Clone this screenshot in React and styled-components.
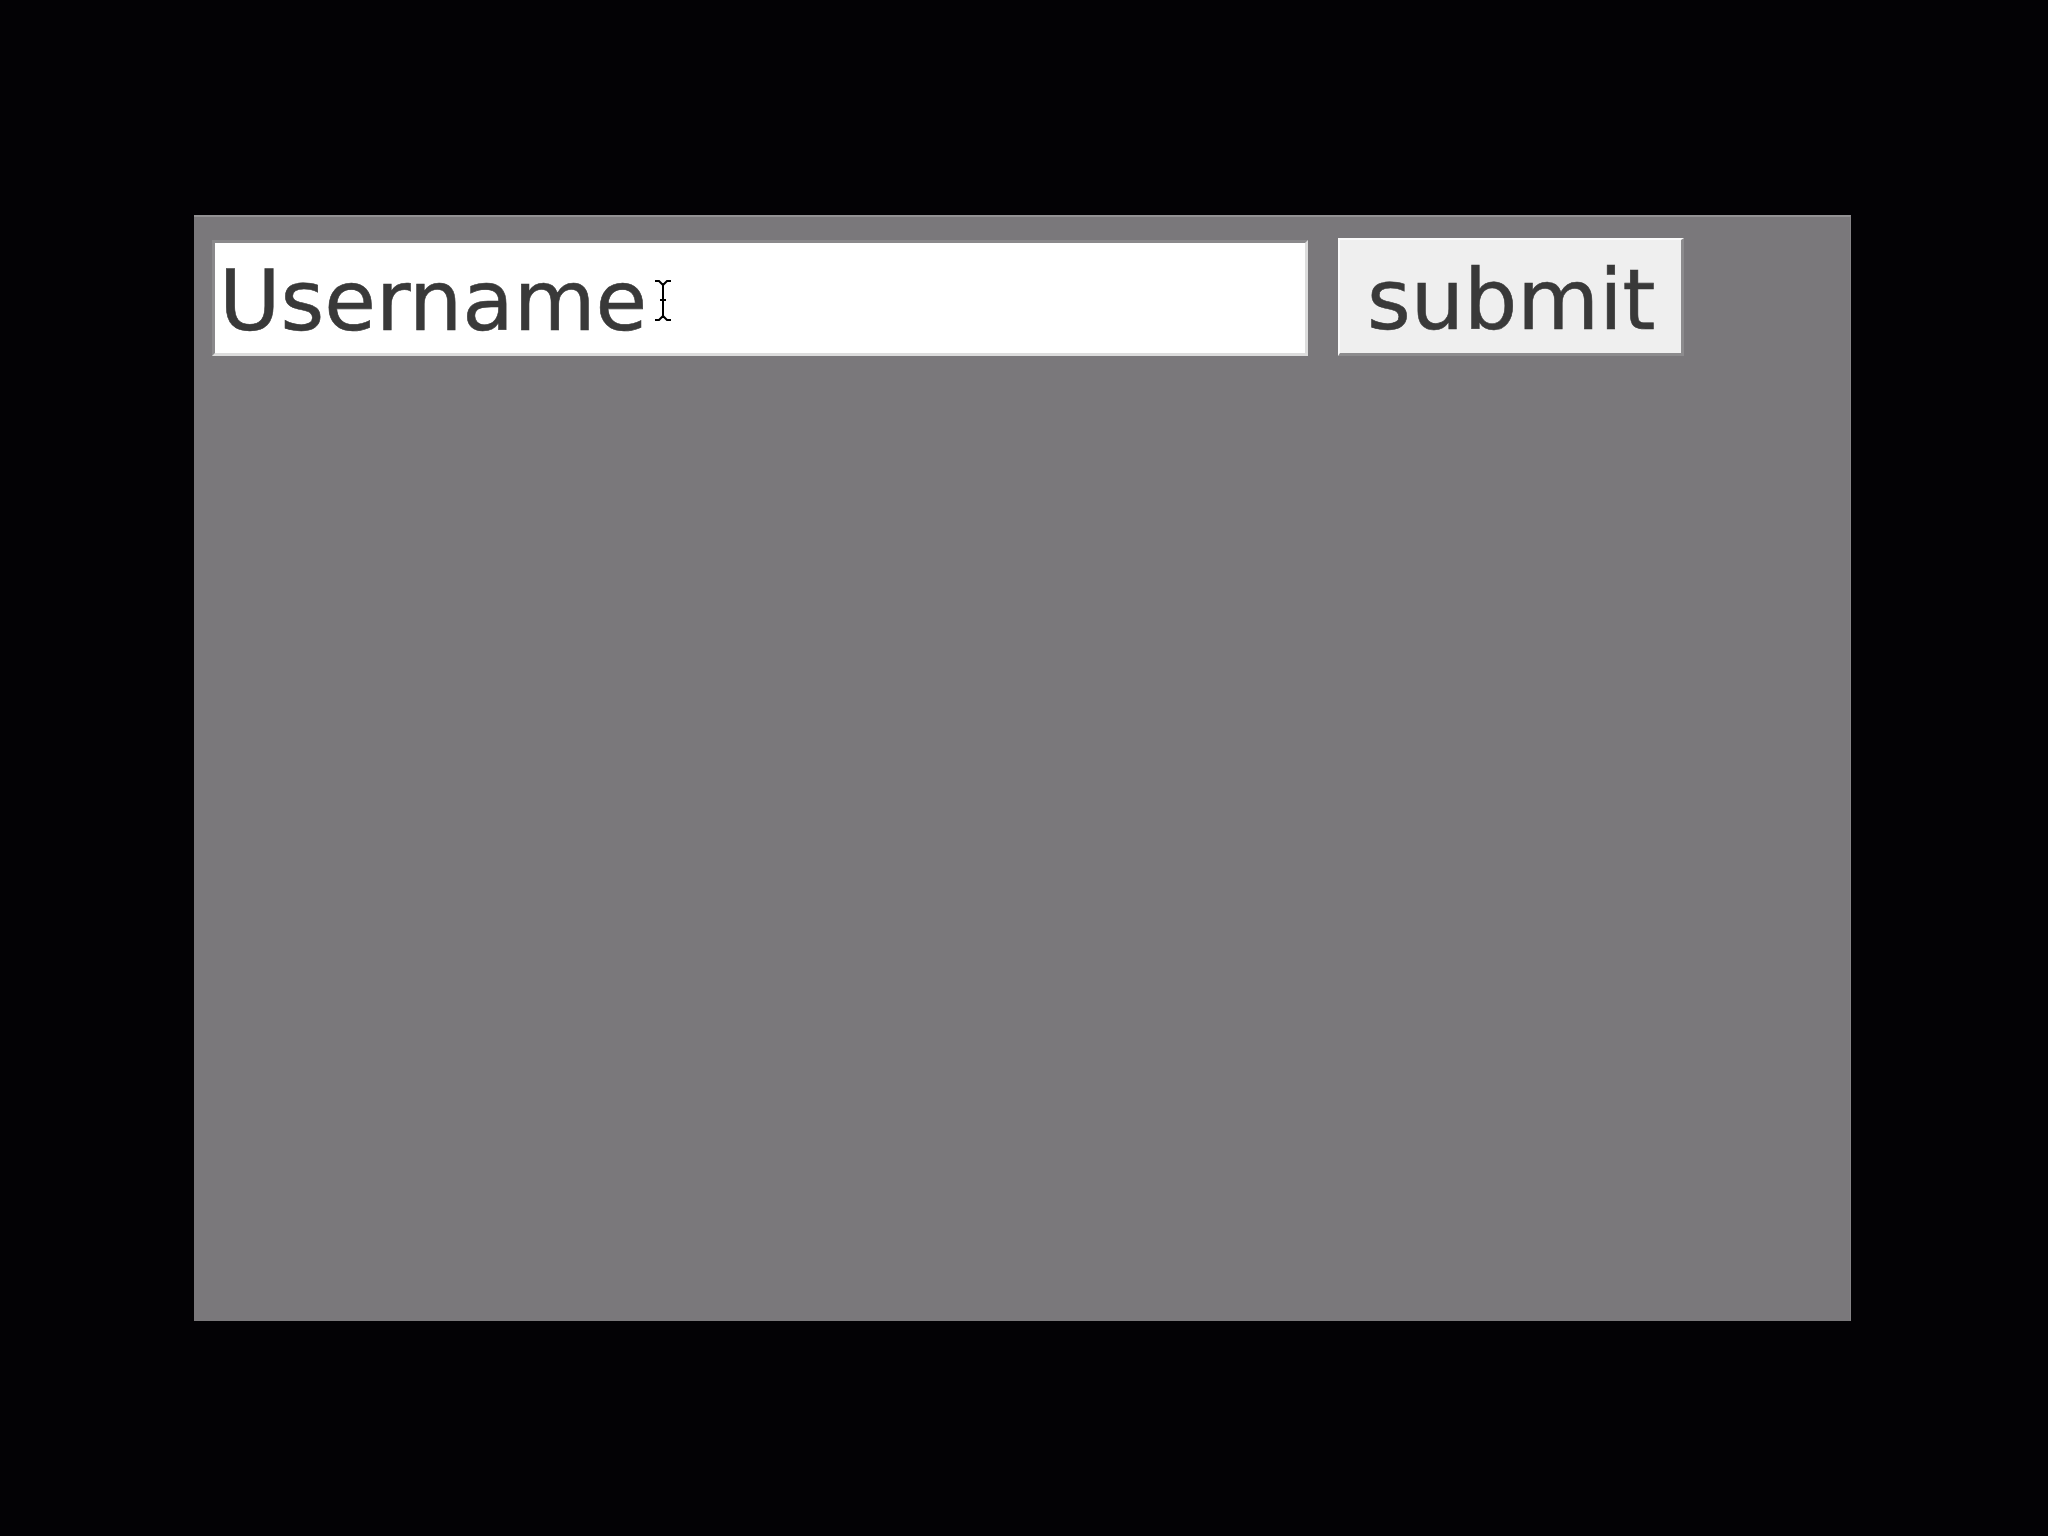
import React from "react";
import styled, { createGlobalStyle } from "styled-components";

const GlobalStyle = createGlobalStyle`
  html, body {
    margin: 0;
    padding: 0;
    background: #030205;
    font-family: "DejaVu Sans", Verdana, sans-serif;
  }
`;

const Page = styled.div`
  width: 2048px;
  height: 1536px;
  padding: 215px 0 0 194px;
  box-sizing: border-box;
`;

const Panel = styled.div`
  width: 1657px;
  height: 1106px;
  box-sizing: border-box;
  background: #7a787b;
  border-top: 2px solid #939294;
  border-right: 1px solid #858386;
  padding: 21px 0 0 18px;
`;

const Row = styled.form`
  display: flex;
  align-items: flex-start;
  gap: 30px;
  margin: 0;
`;

const InputWrap = styled.div`
  position: relative;
  margin-top: 2px;
`;

const TextField = styled.input`
  display: block;
  box-sizing: border-box;
  width: 1096px;
  height: 116px;
  margin: 0;
  padding: 9px 0 3px 4px;
  border-style: solid;
  border-width: 3px;
  border-color: #8a898b #dcdcdc #dcdcdc #8a898b;
  background: #fff;
  color: #393939;
  font-family: "DejaVu Sans", Verdana, sans-serif;
  font-size: 84px;
  line-height: normal;
  -webkit-text-stroke: 0.6px #393939;
  outline: none;
`;

const Cursor = styled.svg`
  position: absolute;
  left: 441px;
  top: 39px;
  pointer-events: none;
`;

const SubmitButton = styled.button`
  box-sizing: border-box;
  height: 118px;
  margin: 0;
  padding: 11px 26px 4px 27px;
  border-style: solid;
  border-width: 2px 3px 3px 2px;
  border-color: #fbfbfb #8c8b8d #8c8b8d #fbfbfb;
  background: #efefef;
  color: #393939;
  font-family: "DejaVu Sans", Verdana, sans-serif;
  font-size: 84px;
  line-height: normal;
  -webkit-text-stroke: 0.6px #393939;
  text-align: left;
  cursor: default;
`;

export default function App() {
  return (
    <>
      <GlobalStyle />
      <Page>
        <Panel>
          <Row onSubmit={(e) => e.preventDefault()}>
            <InputWrap>
              <TextField type="text" defaultValue="Username" />
              <Cursor width="20" height="43" viewBox="0 0 20 43">
                <g stroke="#000" strokeWidth="2" fill="none">
                  <path d="M2 2 H6 L10 6 L14 2 H18" />
                  <path d="M10 6 V37" />
                  <path d="M7 21 H13" />
                  <path d="M2 41 H6 L10 37 L14 41 H18" />
                </g>
              </Cursor>
            </InputWrap>
            <SubmitButton type="submit">submit</SubmitButton>
          </Row>
        </Panel>
      </Page>
    </>
  );
}
